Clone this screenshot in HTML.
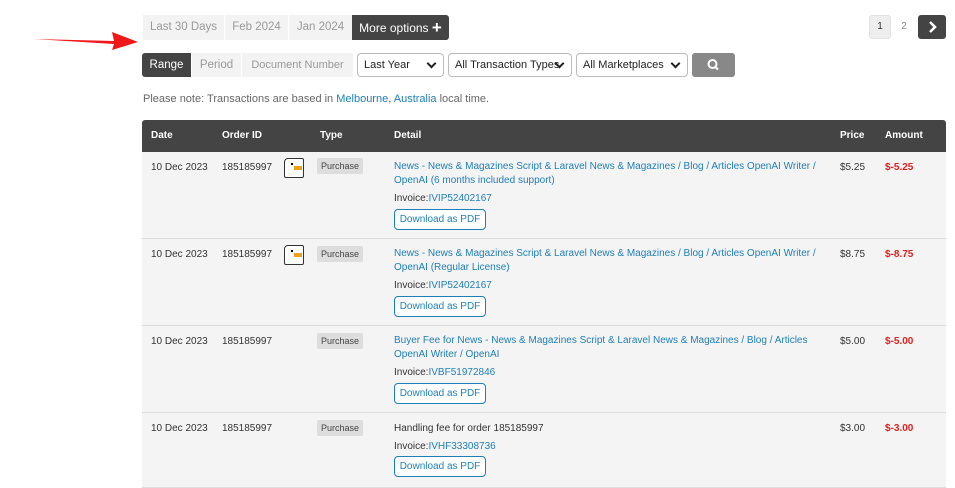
<!DOCTYPE html>
<html><head><style>
*{margin:0;padding:0;box-sizing:border-box}
body{width:955px;height:488px;background:#fff;font-family:"Liberation Sans",Arial,sans-serif;position:relative;overflow:hidden;color:#333}
.a{position:absolute}
.tab{position:absolute;height:25px;line-height:25px;font-size:11.5px;color:#999;background:#f3f3f3;text-align:center}
.dark{background:#444;color:#fff}
.sel{position:absolute;top:53px;height:24px;border:1px solid #bbb;border-radius:4px;font-size:11px;line-height:22px;padding-left:6px;color:#222;background:#fff}
.sel:after{content:"";position:absolute;right:8px;top:6px;width:5px;height:5px;border-right:2px solid #222;border-bottom:2px solid #222;transform:rotate(45deg)}
.th{position:absolute;top:120px;height:32px;line-height:31px;color:#fff;font-weight:bold;font-size:10px}
.row{position:absolute;left:142px;width:804px;background:#f4f4f4;border-bottom:1px solid #ddd;font-size:10px}
.row div{position:absolute;white-space:nowrap}
.badge{background:#ddd;border-radius:2px;padding:0 4px;height:16px;line-height:16px;font-size:9px;color:#444}
.lk{color:#1e7fb8}
.btn{border:1px solid #1e7fb8;color:#1e7fb8;border-radius:4px;width:92px;height:21px;line-height:19px;text-align:center;font-size:10px;background:#fff}
.neg{color:#e02020;font-weight:bold}
</style></head><body>
<svg class="a" style="left:34px;top:30px" width="104" height="22"><polygon points="0,9 80,11 78,2 104,12 78,20 80,14" fill="#f01818"/></svg>
<div class="tab" style="left:143px;top:15px;width:81px">Last 30 Days</div>
<div class="tab" style="left:225px;top:15px;width:63px">Feb 2024</div>
<div class="tab" style="left:289px;top:15px;width:63px">Jan 2024</div>
<div class="tab dark" style="left:352px;top:15px;width:97px;border-radius:0 3px 3px 0;font-size:12px">More options <b style="font-size:17px;vertical-align:-1px">+</b></div>
<div class="tab dark" style="left:142px;top:53px;width:49px;height:24px;line-height:24px;border-radius:3px 0 0 3px">Range</div>
<div class="tab" style="left:192px;top:53px;width:49px;height:24px;line-height:24px">Period</div>
<div class="tab" style="left:242px;top:53px;width:111px;height:24px;line-height:24px;font-size:11px">Document Number</div>
<div class="sel" style="left:357px;width:87px">Last Year</div>
<div class="sel" style="left:448px;width:124px">All Transaction Types</div>
<div class="sel" style="left:576px;width:112px">All Marketplaces</div>
<div class="a" style="left:692px;top:53px;width:43px;height:24px;background:#888;border-radius:3px"><svg width="43" height="24"><circle cx="20.5" cy="11" r="4" fill="none" stroke="#fff" stroke-width="2"/><line x1="23.5" y1="14" x2="26" y2="16.5" stroke="#fff" stroke-width="2.2"/></svg></div>
<div class="a" style="left:869px;top:15px;width:22px;height:24px;background:#eee;border:1px solid #e2e2e2;border-radius:3px;font-size:10px;line-height:22px;text-align:center">1</div>
<div class="a" style="left:896px;top:15px;width:16px;height:24px;font-size:10px;line-height:24px;text-align:center;color:#888">2</div>
<div class="a" style="left:918px;top:15px;width:28px;height:24px;background:#444;border-radius:3px"><svg width="28" height="24"><polyline points="12,7 17,12 12,17" fill="none" stroke="#fff" stroke-width="2.5"/></svg></div>
<div class="a" style="left:143px;top:93px;font-size:11px;color:#666">Please note: Transactions are based in <span class="lk">Melbourne</span>, <span class="lk">Australia</span> local time.</div>
<div class="a" style="left:142px;top:120px;width:804px;height:32px;background:#444;border-radius:3px 3px 0 0"></div>
<div class="th" style="left:151px">Date</div><div class="th" style="left:222px">Order ID</div><div class="th" style="left:320px">Type</div><div class="th" style="left:394px">Detail</div><div class="th" style="left:840px">Price</div><div class="th" style="left:885px">Amount</div>

<div class="row" style="top:152px;height:87px">
<div style="left:9px;top:10px">10 Dec 2023</div><div style="left:80px;top:10px">185185997</div>
<div style="left:142px;top:6px;width:20px;height:20px;background:#fff;border:1px solid #333;border-radius:4px 2px 2px 2px"><div style="left:9px;top:7px;width:8px;height:4px;background:#f0a020"></div><div style="left:6px;top:4px;width:2px;height:2px;background:#000"></div></div>
<div class="badge" style="left:175px;top:6px">Purchase</div>
<div style="left:252px;top:8px;line-height:14px" class="lk">News - News &amp; Magazines Script &amp; Laravel News &amp; Magazines / Blog / Articles OpenAI Writer /<br>OpenAI (6 months included support)</div>
<div style="left:252px;top:41px">Invoice:<span class="lk">IVIP52402167</span></div>
<div class="btn" style="left:252px;top:57px">Download as PDF</div>
<div style="left:698px;top:10px">$5.25</div><div class="neg" style="left:743px;top:10px">$-5.25</div>
</div>
<div class="row" style="top:239px;height:87px">
<div style="left:9px;top:10px">10 Dec 2023</div><div style="left:80px;top:10px">185185997</div>
<div style="left:142px;top:6px;width:20px;height:20px;background:#fff;border:1px solid #333;border-radius:4px 2px 2px 2px"><div style="left:9px;top:7px;width:8px;height:4px;background:#f0a020"></div><div style="left:6px;top:4px;width:2px;height:2px;background:#000"></div></div>
<div class="badge" style="left:175px;top:7px">Purchase</div>
<div style="left:252px;top:8px;line-height:14px" class="lk">News - News &amp; Magazines Script &amp; Laravel News &amp; Magazines / Blog / Articles OpenAI Writer /<br>OpenAI (Regular License)</div>
<div style="left:252px;top:41px">Invoice:<span class="lk">IVIP52402167</span></div>
<div class="btn" style="left:252px;top:57px">Download as PDF</div>
<div style="left:698px;top:10px">$8.75</div><div class="neg" style="left:743px;top:10px">$-8.75</div>
</div>
<div class="row" style="top:326px;height:87px">
<div style="left:9px;top:10px">10 Dec 2023</div><div style="left:80px;top:10px">185185997</div>
<div class="badge" style="left:175px;top:7px">Purchase</div>
<div style="left:252px;top:8px;line-height:14px" class="lk">Buyer Fee for News - News &amp; Magazines Script &amp; Laravel News &amp; Magazines / Blog / Articles<br>OpenAI Writer / OpenAI</div>
<div style="left:252px;top:41px">Invoice:<span class="lk">IVBF51972846</span></div>
<div class="btn" style="left:252px;top:57px">Download as PDF</div>
<div style="left:698px;top:10px">$5.00</div><div class="neg" style="left:743px;top:10px">$-5.00</div>
</div>
<div class="row" style="top:413px;height:75px">
<div style="left:9px;top:10px">10 Dec 2023</div><div style="left:80px;top:10px">185185997</div>
<div class="badge" style="left:175px;top:7px">Purchase</div>
<div style="left:252px;top:10px">Handling fee for order 185185997</div>
<div style="left:252px;top:28px">Invoice:<span class="lk">IVHF33308736</span></div>
<div class="btn" style="left:252px;top:43px">Download as PDF</div>
<div style="left:698px;top:10px">$3.00</div><div class="neg" style="left:743px;top:10px">$-3.00</div>
</div>
</body></html>
